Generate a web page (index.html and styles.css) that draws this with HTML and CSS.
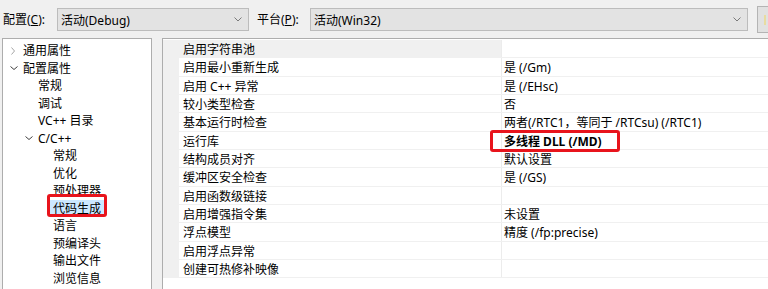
FILE: index.html
```html
<!DOCTYPE html>
<html lang="zh-CN">
<head>
    <meta charset="UTF-8">
    <meta name="viewport" content="width=device-width, initial-scale=1.0">
    <title>属性页</title>
    <link rel="stylesheet" href="styles.css">
</head>
<body>
    <div class="toolbar">
        <label class="field-label label-config">配置(<u>C</u>):</label>
        <div class="combo combo-config">
            <span>活动(Debug)</span>
            <svg class="drop" width="8" height="5" viewBox="0 0 8 5"><path d="M0.5 0.5 L4 4 L7.5 0.5" fill="none" stroke="#7a7a7a" stroke-width="1"/></svg>
        </div>
        <label class="field-label label-platform">平台(<u>P</u>):</label>
        <div class="combo combo-platform">
            <span>活动(Win32)</span>
            <svg class="drop" width="8" height="5" viewBox="0 0 8 5"><path d="M0.5 0.5 L4 4 L7.5 0.5" fill="none" stroke="#7a7a7a" stroke-width="1"/></svg>
        </div>
        <button class="manager"><span class="manager-mark"></span></button>
    </div>

    <div class="main">
        <div class="tree">
            <div class="node lvl0"><span class="twisty"><svg width="6" height="8" viewBox="0 0 6 8"><path d="M1.5 0.5 L4.5 4 L1.5 7.5" fill="none" stroke="#a6a6a6" stroke-width="1"/></svg></span><span class="label">通用属性</span></div>
            <div class="node lvl0"><span class="twisty"><svg width="8" height="6" viewBox="0 0 8 6"><path d="M0.5 1.5 L4 4.5 L7.5 1.5" fill="none" stroke="#404040" stroke-width="1"/></svg></span><span class="label">配置属性</span></div>
            <div class="node lvl1"><span class="twisty"></span><span class="label">常规</span></div>
            <div class="node lvl1"><span class="twisty"></span><span class="label">调试</span></div>
            <div class="node lvl1"><span class="twisty"></span><span class="label">VC++ 目录</span></div>
            <div class="node lvl1"><span class="twisty"><svg width="8" height="6" viewBox="0 0 8 6"><path d="M0.5 1.5 L4 4.5 L7.5 1.5" fill="none" stroke="#404040" stroke-width="1"/></svg></span><span class="label">C/C++</span></div>
            <div class="node lvl2"><span class="twisty"></span><span class="label">常规</span></div>
            <div class="node lvl2"><span class="twisty"></span><span class="label">优化</span></div>
            <div class="node lvl2"><span class="twisty"></span><span class="label">预处理器</span></div>
            <div class="node lvl2 selected"><span class="twisty"></span><span class="label">代码生成<span class="mark mark-tree"></span></span></div>
            <div class="node lvl2"><span class="twisty"></span><span class="label">语言</span></div>
            <div class="node lvl2"><span class="twisty"></span><span class="label">预编译头</span></div>
            <div class="node lvl2"><span class="twisty"></span><span class="label">输出文件</span></div>
            <div class="node lvl2"><span class="twisty"></span><span class="label">浏览信息</span></div>
        </div>

        <div class="grid">
            <div class="row first"><div class="gutter"></div><div class="name">启用字符串池</div><div class="value"></div></div>
            <div class="row"><div class="gutter"></div><div class="name">启用最小重新生成</div><div class="value">是 (/Gm)</div></div>
            <div class="row"><div class="gutter"></div><div class="name">启用 C++ 异常</div><div class="value">是 (/EHsc)</div></div>
            <div class="row"><div class="gutter"></div><div class="name">较小类型检查</div><div class="value">否</div></div>
            <div class="row"><div class="gutter"></div><div class="name">基本运行时检查</div><div class="value">两者(/RTC1，等同于 /RTCsu) (/RTC1)</div></div>
            <div class="row"><div class="gutter"></div><div class="name">运行库</div><div class="value bold">多线程 DLL (/MD)<span class="mark mark-value"></span></div></div>
            <div class="row"><div class="gutter"></div><div class="name">结构成员对齐</div><div class="value">默认设置</div></div>
            <div class="row"><div class="gutter"></div><div class="name">缓冲区安全检查</div><div class="value">是 (/GS)</div></div>
            <div class="row"><div class="gutter"></div><div class="name">启用函数级链接</div><div class="value"></div></div>
            <div class="row"><div class="gutter"></div><div class="name">启用增强指令集</div><div class="value">未设置</div></div>
            <div class="row"><div class="gutter"></div><div class="name">浮点模型</div><div class="value">精度 (/fp:precise)</div></div>
            <div class="row"><div class="gutter"></div><div class="name">启用浮点异常</div><div class="value"></div></div>
            <div class="row"><div class="gutter"></div><div class="name">创建可热修补映像</div><div class="value"></div></div>
        </div>
    </div>
</body>
</html>
```

FILE: styles.css
```css
body {
    margin: 0;
    width: 768px;
    height: 289px;
    overflow: hidden;
    background: #f0f0f0;
    color: #000;
    font-family: "Noto Sans", "Noto Sans CJK SC", sans-serif;
    font-size: 12px;
}
.toolbar {
    display: flex;
    align-items: flex-start;
    height: 38px;
    padding: 8px 0 0 3px;
    box-sizing: border-box;
    white-space: nowrap;
}
.toolbar > * {
    flex-shrink: 0;
}
.field-label {
    height: 23px;
    line-height: 23px;
}
.label-config {
    width: 54px;
}
.label-platform {
    width: 53px;
    margin-left: 8px;
}
.combo {
    display: flex;
    align-items: center;
    justify-content: space-between;
    height: 23px;
    box-sizing: border-box;
    padding: 0 6px 0 3px;
    background: #e3e3e3;
    border: 1px solid #bcbcbc;
}
.combo-config {
    width: 192px;
}
.combo-platform {
    width: 438px;
}
.drop {
    display: block;
}
.manager {
    width: 40px;
    height: 27px;
    margin: -2px 0 0 9px;
    padding: 0;
    background: #e1e1e1;
    border: 1px solid #b4b4b4;
}
.manager-mark {
    display: block;
    width: 2px;
    height: 10px;
    margin-left: 6px;
    background: #e8dca0;
}
.main {
    display: flex;
    gap: 10px;
    height: 251px;
    padding-left: 2px;
}
.tree {
    width: 150px;
    flex-shrink: 0;
    box-sizing: border-box;
    padding-top: 3px;
    background: #fff;
    border: 1px solid #adadad;
    border-bottom: none;
}
.node {
    display: flex;
    align-items: center;
    height: 17.5px;
    line-height: 17.5px;
    white-space: nowrap;
}
.lvl0 {
    padding-left: 5px;
}
.lvl1 {
    padding-left: 20px;
}
.lvl2 {
    padding-left: 35px;
}
.twisty {
    display: flex;
    align-items: center;
    width: 15px;
    height: 17.5px;
    padding-left: 2px;
    box-sizing: border-box;
}
.twisty svg {
    display: block;
}
.label {
    position: relative;
}
.selected .label {
    margin-left: -3px;
    padding: 0 3px;
    background: #cce8ff;
}
.mark {
    position: absolute;
    border: 3px solid #e8141c;
    border-radius: 3px;
    box-sizing: border-box;
}
.mark-tree {
    left: -3px;
    right: -3px;
    top: -6px;
    bottom: 0;
}
.grid {
    flex: 1;
    padding-top: 1px;
    background: #fff;
    border-top: 1px solid #adadad;
    border-left: 1px solid #adadad;
}
.row {
    display: flex;
    height: 18.33px;
    line-height: 17.33px;
    box-sizing: border-box;
    border-bottom: 1px solid #f0f0f0;
    white-space: nowrap;
}
.gutter {
    width: 16px;
    flex-shrink: 0;
    background: #f0f0f0;
}
.name {
    width: 323px;
    flex-shrink: 0;
    padding: 1px 0 0 4px;
    box-sizing: border-box;
    border-right: 1px solid #ececec;
}
.first .name {
    background: #f0f0f0;
}
.value {
    position: relative;
    flex: 1;
    padding: 1px 0 0 2px;
}
.bold {
    font-weight: bold;
}
.mark-value {
    left: -12px;
    top: -2px;
    width: 130px;
    height: 22px;
}
```
